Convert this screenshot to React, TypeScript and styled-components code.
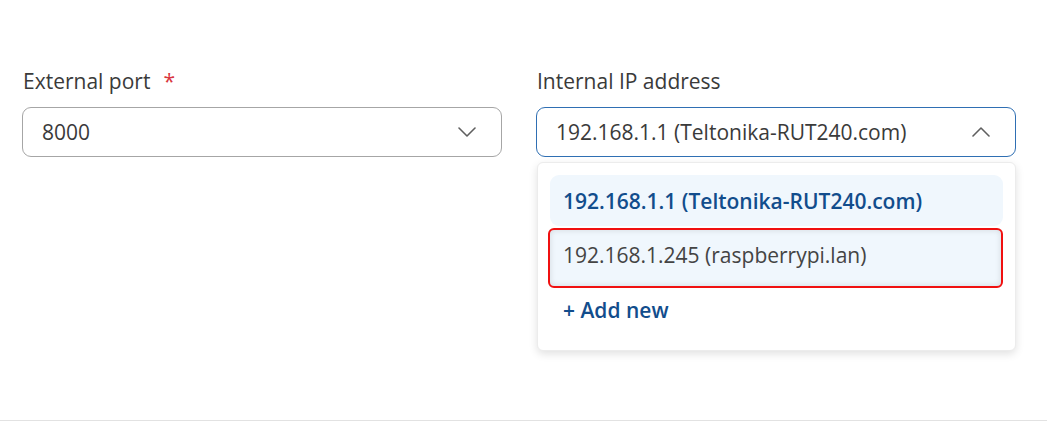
import React, { FC } from 'react'
import styled, { createGlobalStyle } from 'styled-components'

const GlobalStyle = createGlobalStyle`
  html, body {
    margin: 0;
    padding: 0;
    background: #ffffff;
  }
  body {
    font-family: 'Open Sans', 'Noto Sans', sans-serif;
    color: #333333;
  }
`

const Page = styled.div`
  width: 1047px;
  height: 421px;
  box-sizing: border-box;
  border-bottom: 1px solid #e2e2e2;
  padding: 66px 31px 0 22px;
  display: grid;
  grid-template-columns: 480px 480px;
  column-gap: 34px;
  align-items: start;
`

const Field = styled.div`
  position: relative;
  display: flex;
  flex-direction: column;
`

const Label = styled.label`
  font-size: 21px;
  line-height: 30px;
  color: #3a3a3a;
  padding-left: 1px;
  margin-bottom: 11px;

  span {
    color: #d9363e;
    margin-left: 13px;
  }
`

const Select = styled.div<{ $open?: boolean }>`
  height: 50px;
  box-sizing: border-box;
  border: 1px solid ${(p) => (p.$open ? '#2f6fb3' : '#a6a6a6')};
  border-radius: 9px;
  padding: 0 25px 0 19px;
  display: flex;
  align-items: center;
  justify-content: space-between;
  font-size: 21px;
  color: #3a3a3a;
  background: #ffffff;
`

const Menu = styled.div`
  position: absolute;
  top: 96px;
  left: 1px;
  right: 0;
  box-sizing: border-box;
  padding: 12px 12px 16px;
  border: 1px solid #ececec;
  border-radius: 6px;
  background: #ffffff;
  box-shadow: 0 3px 8px rgba(0, 0, 0, 0.12);
  display: flex;
  flex-direction: column;
  gap: 2px;
`

const Option = styled.div<{ $selected?: boolean; $marked?: boolean }>`
  height: ${(p) => (p.$marked ? '60px' : '51px')};
  box-sizing: border-box;
  margin: ${(p) => (p.$marked ? '0 0 0 -2px' : '0')};
  padding-left: ${(p) => (p.$marked ? '13px' : '13px')};
  padding-bottom: ${(p) => (p.$marked ? '7px' : '0')};
  display: flex;
  align-items: center;
  border-radius: ${(p) => (p.$marked ? '6px' : '9px')};
  background: ${(p) => (p.$selected || p.$marked ? '#f0f7fd' : 'transparent')};
  border: ${(p) => (p.$marked ? '2px solid #f01010' : 'none')};
  box-shadow: ${(p) => (p.$marked ? 'inset 0 0 6px rgba(0, 0, 0, 0.12)' : 'none')};
  font-size: 21px;
  font-weight: ${(p) => (p.$selected ? 600 : 400)};
  color: ${(p) => (p.$selected ? '#124d8c' : '#444444')};
`

const AddNew = styled.div`
  height: 44px;
  padding-left: 13px;
  padding-bottom: 4px;
  box-sizing: border-box;
  display: flex;
  align-items: center;
  font-size: 21px;
  font-weight: 600;
  color: #124d8c;
`

const Chevron: FC<{ up?: boolean }> = ({ up }) => (
  <svg width="18" height="10" viewBox="0 0 18 10" fill="none">
    <path
      d={up ? 'M1 9 L9 1 L17 9' : 'M1 1 L9 9 L17 1'}
      stroke="#5f5f5f"
      strokeWidth="1.6"
      strokeLinecap="round"
      strokeLinejoin="round"
    />
  </svg>
)

const App: FC = () => (
  <>
    <GlobalStyle />
    <Page>
      <Field>
        <Label>
          External port<span>*</span>
        </Label>
        <Select>
          8000
          <Chevron />
        </Select>
      </Field>

      <Field>
        <Label>Internal IP address</Label>
        <Select $open>
          192.168.1.1 (Teltonika-RUT240.com)
          <Chevron up />
        </Select>
        <Menu>
          <Option $selected>192.168.1.1 (Teltonika-RUT240.com)</Option>
          <Option $marked>192.168.1.245 (raspberrypi.lan)</Option>
          <AddNew>+ Add new</AddNew>
        </Menu>
      </Field>
    </Page>
  </>
)

export default App
